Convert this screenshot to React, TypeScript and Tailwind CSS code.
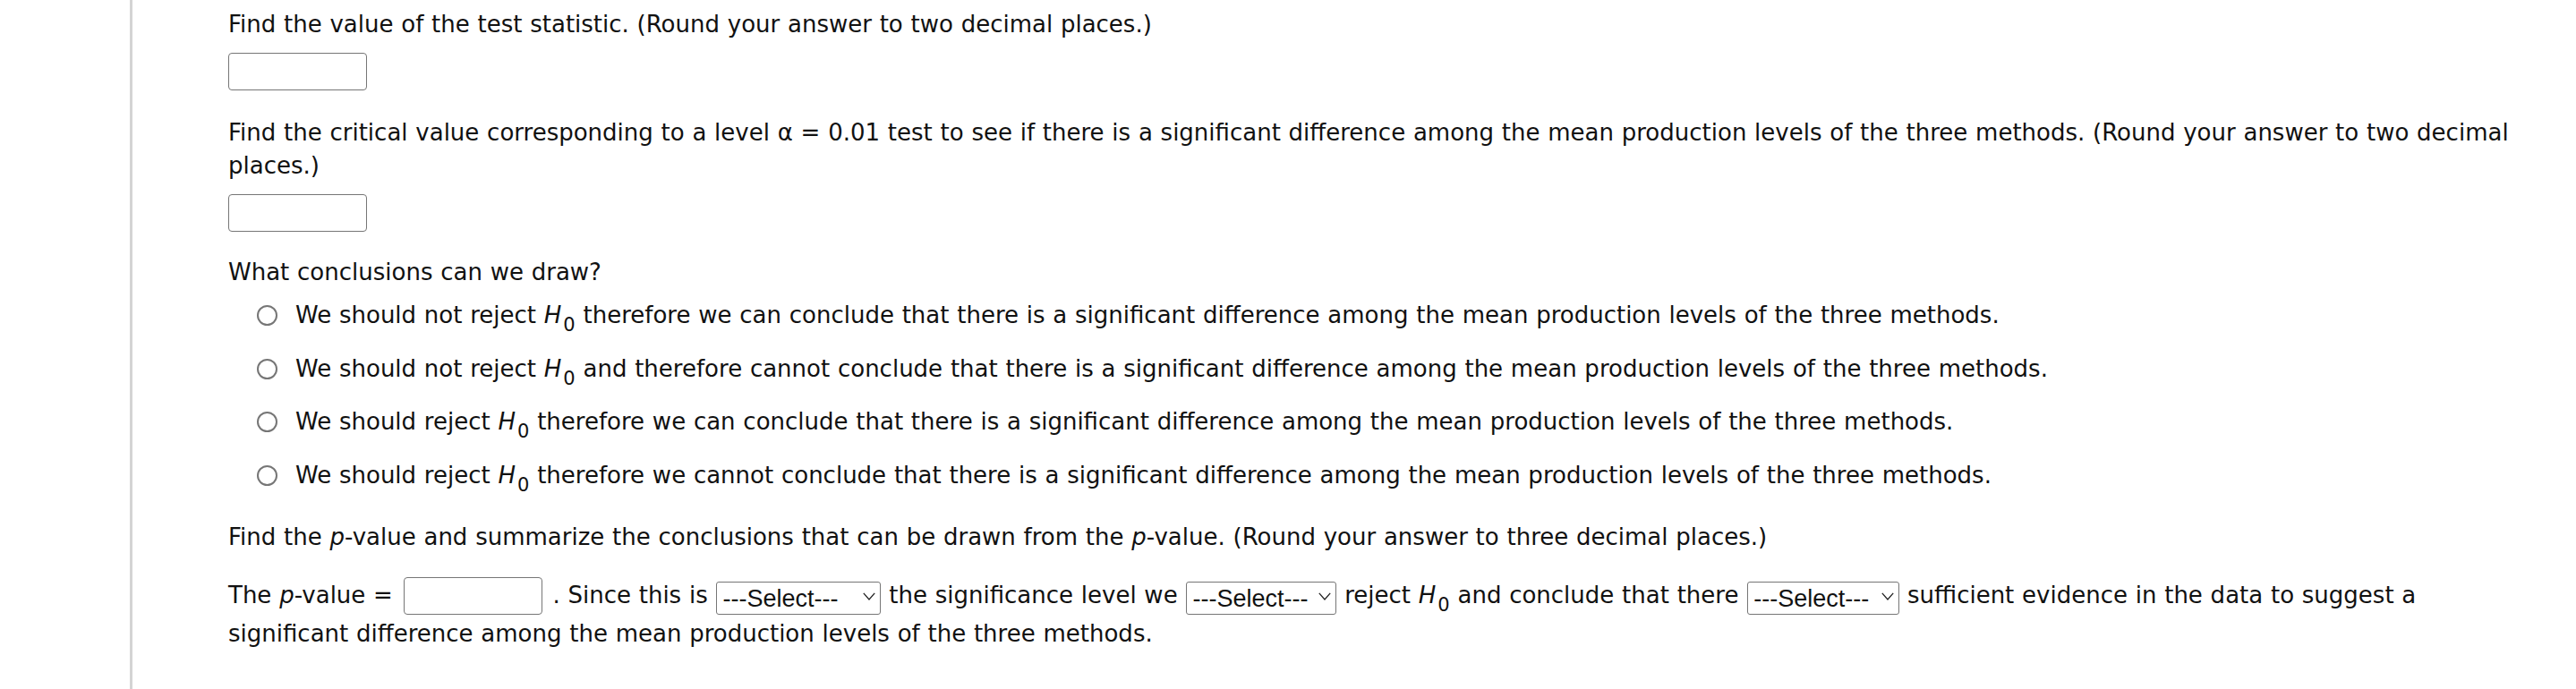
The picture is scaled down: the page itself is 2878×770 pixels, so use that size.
import React from "react";

const H0 = () => (
  <>
    <i>H</i>
    <sub className="ml-[2px] bottom-[-9px] text-[21px]">0</sub>
  </>
);

const AnswerBox = ({ inline = false }: { inline?: boolean }) => (
  <input
    type="text"
    className={
      inline
        ? "mx-[3px] inline-block h-[42px] w-[155px] rounded-[4px] border-[1.5px] border-[#767676] bg-white align-middle"
        : "block h-[42px] w-[155px] rounded-[4px] border-[1.5px] border-[#767676] bg-white"
    }
  />
);

const Dropdown = ({ width, options }: { width: string; options: string[] }) => (
  <span className={`relative ml-[1px] inline-block h-[37px] align-middle ${width}`}>
    <select className="h-full w-full appearance-none rounded-[3px] border-[1.5px] border-[#767676] bg-white pl-[6px] font-['Liberation_Sans',Arial,sans-serif] text-[27px] leading-[34px] text-[#111] [word-spacing:0]">
      <option>---Select---</option>
      {options.map((o) => (
        <option key={o}>{o}</option>
      ))}
    </select>
    <svg
      className="pointer-events-none absolute right-[6px] top-[14px] h-[9px] w-[14px]"
      viewBox="0 0 14 9"
      fill="none"
      stroke="#222"
      strokeWidth={1.3}
    >
      <path d="M0.8 0.8 L7 8 L13.2 0.8" />
    </svg>
  </span>
);

const Choice = ({ children }: { children: React.ReactNode }) => (
  <label className="flex h-[59.5px] items-center pl-[32px]">
    <input
      type="radio"
      name="conclusion"
      className="mr-[20px] h-[23px] w-[23px] shrink-0 appearance-none rounded-full border-2 border-[#767676] bg-white"
    />
    <span>{children}</span>
  </label>
);

export default function App() {
  return (
    <div className="flex min-h-[770px] w-full bg-white">
      <div className="w-[148px] shrink-0 border-r-[3px] border-[#d4d4d4]" />
      <div className="pl-[107px] pt-[9px] font-['DejaVu_Sans',Verdana,sans-serif] text-[26px] leading-[37.5px] text-[#111] [word-spacing:0.5px]">
        <p>Find the value of the test statistic. (Round your answer to two decimal places.)</p>
        <div className="mt-[12px]">
          <AnswerBox />
        </div>

        <p className="mt-[29px] whitespace-nowrap">
          Find the critical value corresponding to a level α = 0.01 test to see if there is a significant difference
          among the mean production levels of the three methods. (Round your answer to two decimal
          <br />
          places.)
        </p>
        <div className="mt-[12px]">
          <AnswerBox />
        </div>

        <p className="mt-[27px]">What conclusions can we draw?</p>
        <div>
          <Choice>
            We should not reject <H0 /> therefore we can conclude that there is a significant difference among the
            mean production levels of the three methods.
          </Choice>
          <Choice>
            We should not reject <H0 /> and therefore cannot conclude that there is a significant difference among
            the mean production levels of the three methods.
          </Choice>
          <Choice>
            We should reject <H0 /> therefore we can conclude that there is a significant difference among the mean
            production levels of the three methods.
          </Choice>
          <Choice>
            We should reject <H0 /> therefore we cannot conclude that there is a significant difference among the
            mean production levels of the three methods.
          </Choice>
        </div>

        <p className="mt-[21px]">
          Find the <i>p</i>-value and summarize the conclusions that can be drawn from the <i>p</i>-value. (Round your
          answer to three decimal places.)
        </p>

        <p className="mt-[24px] whitespace-nowrap leading-[42px]">
          The <i>p</i>-value = <AnswerBox inline /> . Since this is{" "}
          <Dropdown width="w-[184px]" options={["greater than", "less than"]} /> the significance level we{" "}
          <Dropdown width="w-[168px]" options={["can", "cannot"]} /> reject <H0 /> and conclude that there{" "}
          <Dropdown width="w-[170px]" options={["is", "is not"]} /> sufficient evidence in the data to suggest a
          <br />
          significant difference among the mean production levels of the three methods.
        </p>
      </div>
    </div>
  );
}
